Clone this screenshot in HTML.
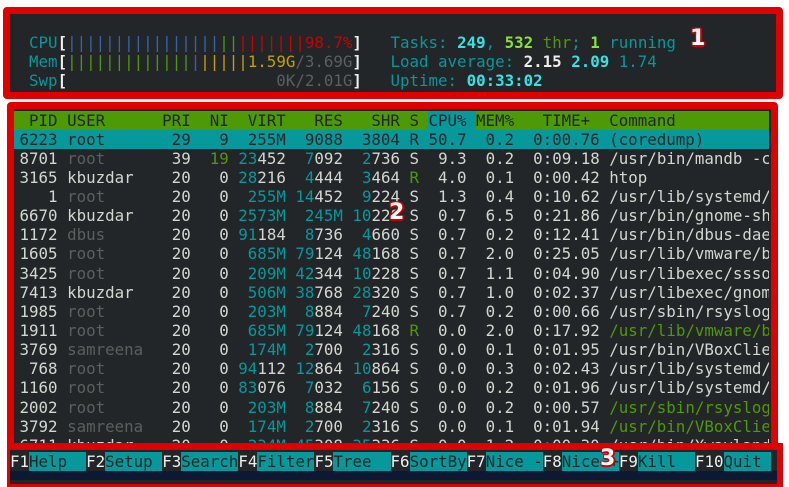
<!DOCTYPE html>
<html><head><meta charset="utf-8"><style>
*{margin:0;padding:0;box-sizing:border-box}
body{width:789px;height:483px;background:#fff;position:relative;overflow:hidden;font-family:"DejaVu Sans Mono","Liberation Mono",monospace;font-size:15.8px;color:#d3d7cf}
.box{position:absolute;border:7px solid #e00000;border-radius:4px;background:#232629}
.ln{position:absolute;white-space:pre;height:19px;line-height:19px}
.t{color:#06989a}.g{color:#5c5f5d}.G{color:#4e9a06}.b{color:#3465a4}.r{color:#cc0000}.y{color:#c4a000}
.W{color:#eeeeec;font-weight:bold}.C{color:#34e2e2;font-weight:bold}.GB{color:#8ae234;font-weight:bold}
#tbl{position:absolute;left:14px;top:109px;width:755px;height:334px;overflow:hidden;background:#232629}
#tbl .row{position:absolute;left:-4px;width:800px;white-space:pre;height:19.13px;line-height:19.13px}
.hdr{background:#4e9a06;color:#232629}
.sel{background:#06989a;color:#232629}
.hc{background:#06989a}
.num{position:absolute;font-family:"DejaVu Sans","Liberation Sans",sans-serif;font-weight:bold;font-size:22px;color:#fff;text-shadow:-1px -1px 0 #c00,1px -1px 0 #c00,-1px 1px 0 #c00,1px 1px 0 #c00,0 2px 0 #c00,2px 0 0 #c00}
.fk{color:#eeeeec}.fl{background:#06989a;color:#232629}
</style></head><body>

<div class="box" style="left:3px;top:7px;width:780px;height:92px"></div>
<div class="ln" style="left:10px;top:33px"><span class="t">  CPU</span><span class="W">[</span><span class="b">||||||||||||||||</span><span class="G">||</span><span class="r">|||||||98.7%</span><span class="W">]</span>   <span class="t">Tasks: </span><span class="C">249</span><span class="t">, </span><span class="GB">532</span><span class="G"> thr</span><span class="t">; </span><span class="GB">1</span><span class="t"> running</span></div>
<div class="ln" style="left:10px;top:52px"><span class="t">  Mem</span><span class="W">[</span><span class="G">|||||||||||||</span><span class="b">|</span><span class="y">|||||1.59G</span><span class="g">/3.69G</span><span class="W">]</span>   <span class="t">Load average: </span><span class="W">2.15 </span><span class="C">2.09 </span><span class="t">1.74</span></div>
<div class="ln" style="left:10px;top:71px"><span class="t">  Swp</span><span class="W">[</span><span class="g">                      0K/2.01G</span><span class="W">]</span>   <span class="t">Uptime: </span><span class="C">00:33:02</span></div>

<div class="box" style="left:7px;top:102px;width:771px;height:348px"></div>
<div id="tbl">
<div class="row hdr" style="top:1.5px">  PID USER      PRI  NI  VIRT   RES   SHR S <span class="hc">CPU% </span>MEM%   TIME+  Command                 </div>
<div class="row sel" style="top:20.6px"> 6223 root       29   9  255M  9088  3804 R 50.7  0.2  0:00.76 (coredump)              </div>
<div class="row" style="top:39.8px"> 8701 <span class="g">root     </span>  39  <span class="G">19</span> <span class="t">23</span>452  <span class="t">7</span>092  <span class="t">2</span>736 S  9.3  0.2  0:09.18 /usr/bin/mandb -c</div>
<div class="row" style="top:58.9px"> 3165 kbuzdar    20   0 <span class="t">28</span>216  <span class="t">4</span>444  <span class="t">3</span>464 <span class="G">R</span>  4.0  0.1  0:00.42 htop</div>
<div class="row" style="top:78.0px">    1 <span class="g">root     </span>  20   0  <span class="t">255M</span> <span class="t">14</span>452  <span class="t">9</span>224 S  1.3  0.4  0:10.62 /usr/lib/systemd/</div>
<div class="row" style="top:97.2px"> 6670 kbuzdar    20   0 <span class="t">2573M</span>  <span class="t">245M</span> <span class="t">10</span>228 S  0.7  6.5  0:21.86 /usr/bin/gnome-sh</div>
<div class="row" style="top:116.3px"> 1172 <span class="g">dbus     </span>  20   0 <span class="t">91</span>184  <span class="t">8</span>736  <span class="t">4</span>660 S  0.7  0.2  0:12.41 /usr/bin/dbus-dae</div>
<div class="row" style="top:135.4px"> 1605 <span class="g">root     </span>  20   0  <span class="t">685M</span> <span class="t">79</span>124 <span class="t">48</span>168 S  0.7  2.0  0:25.05 /usr/lib/vmware/b</div>
<div class="row" style="top:154.5px"> 3425 <span class="g">root     </span>  20   0  <span class="t">209M</span> <span class="t">42</span>344 <span class="t">10</span>228 S  0.7  1.1  0:04.90 /usr/libexec/ssso</div>
<div class="row" style="top:173.7px"> 7413 kbuzdar    20   0  <span class="t">506M</span> <span class="t">38</span>768 <span class="t">28</span>320 S  0.7  1.0  0:02.37 /usr/libexec/gnom</div>
<div class="row" style="top:192.8px"> 1985 <span class="g">root     </span>  20   0  <span class="t">203M</span>  <span class="t">8</span>884  <span class="t">7</span>240 S  0.7  0.2  0:00.66 /usr/sbin/rsyslog</div>
<div class="row" style="top:211.9px"> 1911 <span class="g">root     </span>  20   0  <span class="t">685M</span> <span class="t">79</span>124 <span class="t">48</span>168 <span class="G">R</span>  0.0  2.0  0:17.92 <span class="G">/usr/lib/vmware/b</span></div>
<div class="row" style="top:231.1px"> 3769 <span class="g">samreena </span>  20   0  <span class="t">174M</span>  <span class="t">2</span>700  <span class="t">2</span>316 S  0.0  0.1  0:01.95 /usr/bin/VBoxClie</div>
<div class="row" style="top:250.2px">  768 <span class="g">root     </span>  20   0 <span class="t">94</span>112 <span class="t">12</span>864 <span class="t">10</span>864 S  0.0  0.3  0:02.43 /usr/lib/systemd/</div>
<div class="row" style="top:269.3px"> 1160 <span class="g">root     </span>  20   0 <span class="t">83</span>076  <span class="t">7</span>032  <span class="t">6</span>156 S  0.0  0.2  0:01.96 /usr/lib/systemd/</div>
<div class="row" style="top:288.5px"> 2002 <span class="g">root     </span>  20   0  <span class="t">203M</span>  <span class="t">8</span>884  <span class="t">7</span>240 S  0.0  0.2  0:00.57 <span class="G">/usr/sbin/rsyslog</span></div>
<div class="row" style="top:307.6px"> 3792 <span class="g">samreena </span>  20   0  <span class="t">174M</span>  <span class="t">2</span>700  <span class="t">2</span>316 S  0.0  0.1  0:01.94 <span class="G">/usr/bin/VBoxClie</span></div>
<div class="row" style="top:326.7px"> 6711 kbuzdar    20   0  <span class="t">234M</span> <span class="t">45</span>308 <span class="t">35</span>336 S  0.0  1.2  0:00.30 /usr/bin/Xwayland</div>
</div>

<div class="box" style="left:7px;top:443px;width:776px;height:44px;border-top-width:7px;border-left-width:3px;border-right-width:6px;border-bottom-width:3px;border-radius:0"></div>
<div style="position:absolute;left:10px;top:471px;width:767px;height:9px;background:#0c1834"></div>
<div class="ln" style="left:10px;top:452px"><span class="fk">F1</span><span class="fl">Help  </span><span class="fk">F2</span><span class="fl">Setup </span><span class="fk">F3</span><span class="fl">Search</span><span class="fk">F4</span><span class="fl">Filter</span><span class="fk">F5</span><span class="fl">Tree  </span><span class="fk">F6</span><span class="fl">SortBy</span><span class="fk">F7</span><span class="fl">Nice -</span><span class="fk">F8</span><span class="fl">Nice +</span><span class="fk">F9</span><span class="fl">Kill  </span><span class="fk">F10</span><span class="fl">Quit </span></div>

<div class="num" style="left:690px;top:26px">1</div>
<div class="num" style="left:389px;top:200px">2</div>
<div class="num" style="left:600px;top:446px">3</div>
</body></html>
